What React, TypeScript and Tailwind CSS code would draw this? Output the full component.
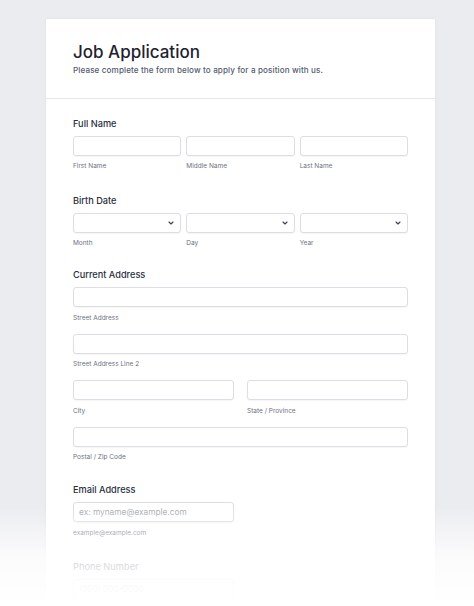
import React from 'react';

const font = { fontFamily: 'Inter, "Noto Sans", sans-serif' };

const Chevron = () => (
  <svg width="6" height="4" viewBox="0 0 6 4" className="absolute right-[6px] top-1/2 -translate-y-1/2" fill="none">
    <path d="M1 1 3 3 5 1" stroke="#3b4050" strokeWidth="1.1" strokeLinecap="round" strokeLinejoin="round" />
  </svg>
);

const Input = ({ placeholder, select }: { placeholder?: string; select?: boolean }) => (
  <div className="relative h-[20px] w-full rounded-[3px] border border-[#dcdee3] bg-white shadow-[0_1px_1px_rgba(20,30,60,0.04)] flex items-center px-[5px]">
    {placeholder && <span className="text-[8.3px] text-[#a6aab5]">{placeholder}</span>}
    {select && <Chevron />}
  </div>
);

const Field = ({ sub, placeholder, select, last }: { sub?: string; placeholder?: string; select?: boolean; last?: boolean }) => (
  <div className={last ? '' : 'mb-[11px]'}>
    <Input placeholder={placeholder} select={select} />
    {sub && <p className="mt-[6.4px] text-[6.5px] leading-[9px] text-[#6d7181]">{sub}</p>}
  </div>
);

const Label = ({ children }: { children: React.ReactNode }) => (
  <p className="mb-[6px] text-[9.2px] leading-[12px] font-medium text-[#2a2f3e]">{children}</p>
);

export default function App() {
  return (
    <div className="relative h-[606px] w-[474px] overflow-hidden bg-[#ebecf0]" style={font}>
      <div className="mx-[46px] mt-[19px] w-[389px] bg-white shadow-[0_0_3px_rgba(30,40,70,0.06)]">
        {/* Header */}
        <div className="border-b border-[#e6e8ed] px-[27px] pt-[22px] pb-[22px]">
          <h1 className="text-[17px] leading-[22px] font-medium text-[#1e2230]">Job Application</h1>
          <p className="mt-[1.5px] text-[8.1px] leading-[11px] font-medium tracking-[0.12px] text-[#545a6e]">
            Please complete the form below to apply for a position with us.
          </p>
        </div>

        {/* Body */}
        <div className="px-[27px] pt-[19.6px] pb-[40px]">
          <Label>Full Name</Label>
          <div className="grid grid-cols-3 gap-[5px]">
            <Field sub="First Name" last />
            <Field sub="Middle Name" last />
            <Field sub="Last Name" last />
          </div>

          <div className="mt-[23.5px]">
            <Label>Birth Date</Label>
            <div className="grid grid-cols-3 gap-[5px]">
              <Field sub="Month" select last />
              <Field sub="Day" select last />
              <Field sub="Year" select last />
            </div>
          </div>

          <div className="mt-[21px]">
            <Label>Current Address</Label>
            <Field sub="Street Address" />
            <Field sub="Street Address Line 2" />
            <div className="grid grid-cols-2 gap-[13px]">
              <Field sub="City" />
              <Field sub="State / Province" />
            </div>
            <Field sub="Postal / Zip Code" last />
          </div>

          <div className="mt-[22.5px]">
            <Label>Email Address</Label>
            <div className="w-[161px]">
              <Field sub="example@example.com" placeholder="ex: myname@example.com" last />
            </div>
          </div>

          <div className="mt-[23.5px]">
            <Label>Phone Number</Label>
            <div className="w-[161px]">
              <Field placeholder="(000) 000-0000" last />
            </div>
          </div>
        </div>
      </div>

      {/* bottom fade */}
      <div className="pointer-events-none absolute inset-x-0 bottom-0 h-[100px] bg-gradient-to-b from-white/0 via-white/80 to-white" />
    </div>
  );
}
